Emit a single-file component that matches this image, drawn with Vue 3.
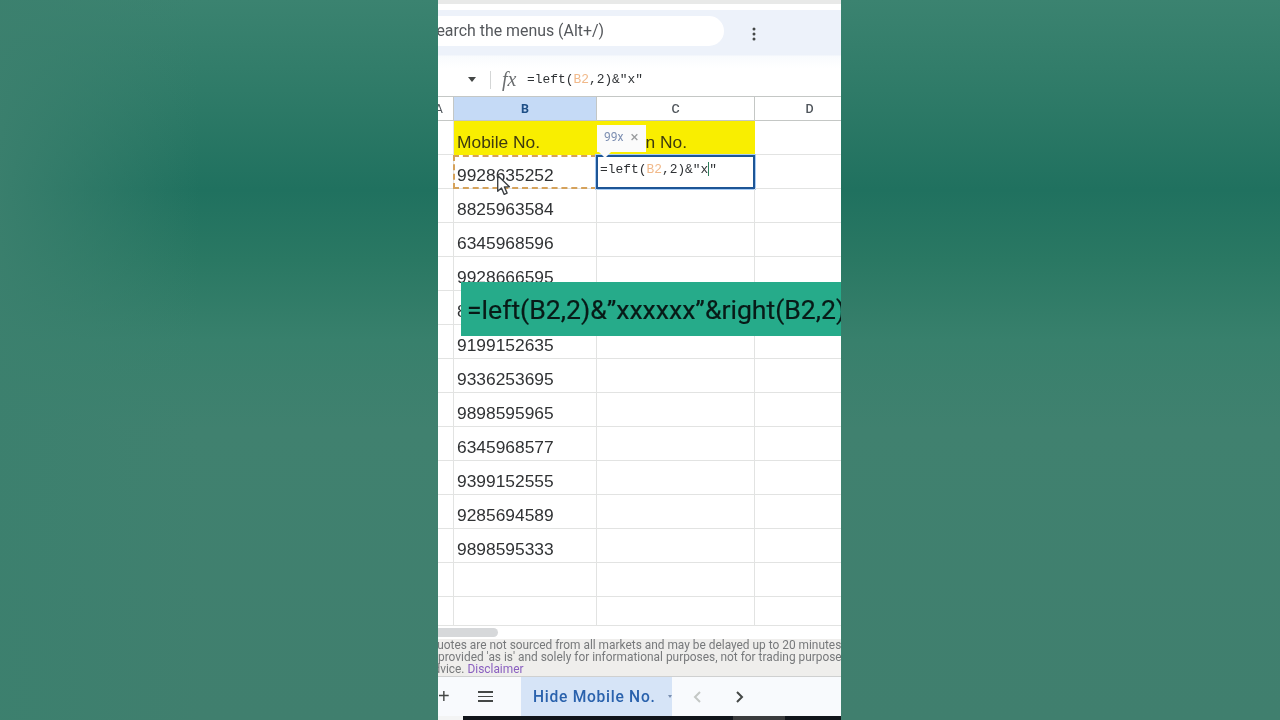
<script setup>
const numbers = [
  '9928635252', '8825963584', '6345968596', '9928666595', '8825963596', '9199152635',
  '9336253695', '9898595965', '6345968577', '9399152555', '9285694589', '9898595333', '', ''
]
const rows = numbers.map((num, i) => ({ num, id: i }))
</script>

<template>
  <div class="page">
    <div class="phone">
      <div class="top-strip"></div>
      <div class="toolbar">
        <div class="search"><span>Search the menus (Alt+/)</span></div>
        <svg class="dots" width="4" height="14" viewBox="0 0 4 14"><circle cx="2" cy="2" r="1.5" /><circle cx="2" cy="7" r="1.5" /><circle cx="2" cy="12" r="1.5" /></svg>
      </div>
      <div class="formula-bar">
        <span class="caret"></span>
        <span class="sep"></span>
        <span class="fx">fx</span>
        <span class="mono">=left(<b class="ref">B2</b>,2)&amp;"x"</span>
      </div>

      <div class="sheet">
        <div class="head-row">
          <div class="head a">A</div>
          <div class="head b">B</div>
          <div class="head c">C</div>
          <div class="head d">D</div>
        </div>
        <div class="row title-row">
          <div class="cell a"></div>
          <div class="cell yellow">Mobile No.</div>
          <div class="cell yellow">Hidden No.</div>
          <div class="cell"></div>
        </div>
        <div v-for="r in rows" :key="r.id" class="row">
          <div class="cell a"></div>
          <div class="cell" :class="{ copied: r.id === 0 }">{{ r.num }}</div>
          <div class="cell" :class="{ active: r.id === 0 }">
            <span v-if="r.id === 0" class="mono cell-input">=left(<b class="ref">B2</b>,2)&amp;"x<i class="text-caret"></i>"</span>
          </div>
          <div class="cell"></div>
        </div>

        <div class="hint">
          <span class="hint-val">99x</span>
          <span class="hint-close">×</span>
          <i class="hint-tail"></i>
        </div>
        <svg class="cursor" width="17" height="23" viewBox="0 0 16 22">
          <path d="M1.5 1.5v15l3.6-3.2 2.6 6.2 2.8-1.2-2.6-6h4.8z" fill="#fff" stroke="#3c4043" stroke-width="1.3" stroke-linejoin="round" />
        </svg>
      </div>

      <div class="scroll-area"><div class="scroll-thumb"></div></div>
      <div class="notice">
        <div class="l1">Quotes are not sourced from all markets and may be delayed up to 20 minutes. Information is</div>
        <div>provided 'as is' and solely for informational purposes, not for trading purposes or advice.</div>
        <div class="l3">advice. <span class="link">Disclaimer</span></div>
      </div>
      <div class="tabs">
        <span class="plus">+</span>
        <span class="menu"><i></i><i></i><i></i></span>
        <div class="tab">Hide Mobile No.<i class="tab-arrow"></i></div>
        <svg class="chev first" width="10" height="14" viewBox="0 0 10 14"><path d="M8 2 3 7l5 5" fill="none" stroke="#c4c7c5" stroke-width="2" /></svg>
        <svg class="chev" width="10" height="14" viewBox="0 0 10 14"><path d="M2 2l5 5-5 5" fill="none" stroke="#444746" stroke-width="2" /></svg>
      </div>
      <div class="taskbar"><span class="task-left"></span><span class="task-mid"></span></div>

      <div class="banner">=left(B2,2)&amp;”xxxxxx”&amp;right(B2,2)</div>
    </div>
  </div>
</template>

<style scoped>
.page {
  width: 1280px;
  height: 720px;
  display: flex;
  justify-content: center;
  overflow: hidden;
  background:
    linear-gradient(to right, rgba(60, 128, 110, 0.9) 0, rgba(60, 128, 110, 0) 200px),
    linear-gradient(to bottom, #3b8370 0, #2f7b68 90px, #20715f 190px, #2a7863 260px, #38806c 340px, #40816f 430px, #407f6e 720px);
}

.phone {
  position: relative;
  width: 403px;
  height: 720px;
  margin-left: -1px;
  display: flex;
  flex-direction: column;
  overflow: hidden;
  background: #fff;
  font-family: "Liberation Sans", Arial, sans-serif;
  color: #2b2b2b;
  filter: blur(0.45px);
}

.top-strip {
  height: 4px;
  background: #e8e9e8;
  flex: none;
}

.toolbar {
  height: 58px;
  margin-top: 6px;
  padding-bottom: 13px;
  box-sizing: border-box;
  flex: none;
  display: flex;
  align-items: center;
  background: linear-gradient(to bottom, #edf2fa 0, #edf2fa 45px, #f9fbfd 46px, #fff 58px);
}

.search {
  width: 296px;
  height: 30px;
  margin-top: -4px;
  margin-left: -10px;
  display: flex;
  align-items: center;
  background: #fff;
  border-radius: 0 15px 15px 0;
  font-family: Roboto, sans-serif;
  font-size: 15.9px;
  color: #55585c;
  white-space: nowrap;
  text-indent: -1px;
}

.dots {
  margin-left: 28px;
  margin-top: 2px;
  fill: #444746;
}

.formula-bar {
  height: 33px;
  margin-top: -5px;
  flex: none;
  display: flex;
  align-items: center;
  padding-left: 30px;
}

.caret {
  width: 0;
  height: 0;
  border-left: 4.5px solid transparent;
  border-right: 4.5px solid transparent;
  border-top: 5px solid #444746;
}

.sep {
  width: 1px;
  height: 18px;
  margin-left: 14px;
  background: #d4d6d6;
}

.fx {
  margin-left: 11px;
  width: 25px;
  font-family: "Liberation Serif", serif;
  font-style: italic;
  font-size: 20px;
  color: #6b6e70;
}

.mono {
  font-family: "Liberation Mono", monospace;
  font-size: 12.9px;
  color: #2f3235;
  white-space: nowrap;
}

.ref {
  font-weight: 400;
  color: #f1b98a;
}

.sheet {
  position: relative;
  height: 528px;
  flex: none;
  overflow: hidden;
  border-top: 1px solid #c4c7c5;
}

.head-row,
.row {
  display: grid;
  grid-template-columns: 16px 143px 158px 110px;
}

.head-row {
  height: 24px;
}

.head {
  display: flex;
  align-items: center;
  justify-content: center;
  padding-bottom: 1px;
  font-family: Roboto, sans-serif;
  font-size: 12.5px;
  font-weight: 500;
  color: #50565c;
  border-right: 1px solid #c4c7c5;
  border-bottom: 1px solid #c4c7c5;
}

.head.a {
  justify-content: flex-end;
  padding-right: 10px;
  font-weight: 400;
  overflow: hidden;
}

.head.b {
  background: #c5daf6;
  color: #1f4f86;
  font-weight: 700;
}

.row {
  height: 34px;
}

.cell {
  display: flex;
  align-items: flex-end;
  padding: 0 0 2px 3px;
  border-right: 1px solid #e2e3e2;
  border-bottom: 1px solid #e2e3e2;
  font-size: 17.4px;
  color: #303234;
  white-space: nowrap;
  position: relative;
}

.yellow {
  padding-bottom: 1px;
  background: #f9ee00;
  border-color: #f9ee00;
  color: #3d3a10;
}

.copied::after {
  content: "";
  position: absolute;
  inset: 0 -1px -1px -1px;
  border: 2px dashed #d5a25b;
}

.active::after {
  content: "";
  position: absolute;
  inset: 0 -1px -1px -1px;
  border: 2px solid #1d5596;
  box-shadow: 0 0 0 1px #a8ccf5;
}

.cell-input {
  position: absolute;
  left: 3px;
  top: 7px;
}

.text-caret {
  display: inline-block;
  width: 1px;
  height: 14px;
  vertical-align: -3px;
  background: #2e7d5b;
}

.hint {
  position: absolute;
  left: 159px;
  top: 28px;
  width: 49px;
  height: 27px;
  display: flex;
  align-items: center;
  gap: 7px;
  padding: 0 0 3px 7px;
  box-sizing: border-box;
  background: #fbfbfb;
  font-family: Roboto, sans-serif;
  font-size: 12px;
}

.hint-val {
  color: #7d8fb2;
}

.hint-close {
  color: #9a9c9e;
  font-size: 15px;
}

.hint-tail {
  position: absolute;
  left: 2px;
  bottom: -6px;
  border-left: 6px solid transparent;
  border-right: 6px solid transparent;
  border-top: 6px solid #fbfbfb;
}

.cursor {
  position: absolute;
  left: 58px;
  top: 77px;
}

.scroll-area {
  height: 14px;
  flex: none;
  padding-top: 2px;
  box-sizing: border-box;
  border-top: 1px solid #e2e3e2;
}

.scroll-thumb {
  width: 60px;
  height: 9px;
  background: #d6d8da;
  border-radius: 0 5px 5px 0;
}

.notice {
  height: 38px;
  flex: none;
  box-sizing: border-box;
  background: #efeeec;
  border-bottom: 1px solid #cfd0d0;
  font-family: Roboto, sans-serif;
  font-size: 11.9px;
  line-height: 12px;
  color: #77797b;
  white-space: nowrap;
}

.l1 {
  margin-left: -9px;
}

.l3 {
  margin-left: -11px;
}

.link {
  color: #8a5fc0;
}

.tabs {
  height: 39px;
  flex: none;
  display: flex;
  align-items: center;
  background: #f8fafd;
}

.plus {
  width: 10px;
  font-size: 20px;
  color: #444746;
  text-align: center;
}

.menu {
  margin-left: 30px;
  width: 15px;
  display: flex;
  flex-direction: column;
  gap: 3px;
}

.menu i {
  height: 1.6px;
  background: #444746;
}

.tab {
  position: relative;
  width: 151px;
  height: 39px;
  margin-left: 28px;
  padding-left: 12px;
  box-sizing: border-box;
  display: flex;
  align-items: center;
  background: #d6e4f7;
  font-family: Roboto, sans-serif;
  font-weight: 500;
  font-size: 15.6px;
  letter-spacing: 0.72px;
  color: #2a62ad;
  white-space: nowrap;
}

.tab-arrow {
  position: absolute;
  right: 0;
  top: 18px;
  border-left: 2px solid transparent;
  border-right: 2px solid transparent;
  border-top: 3px solid #7a8fb0;
}

.chev {
  margin-left: 33px;
}

.chev.first {
  margin-left: 20px;
}

.taskbar {
  flex: 1;
  display: flex;
  background: #11151b;
}

.task-left {
  width: 25px;
  background: #f3f4f4;
}

.task-mid {
  width: 52px;
  margin-left: 270px;
  background: #3a3b3d;
}

.banner {
  position: absolute;
  left: 23px;
  top: 282px;
  width: 400px;
  height: 54px;
  padding: 1px 0 0 6px;
  box-sizing: border-box;
  display: flex;
  align-items: center;
  background: #26ab8a;
  font-family: Roboto, sans-serif;
  font-size: 26.6px;
  color: #081a17;
  white-space: nowrap;
  -webkit-text-stroke: 0.2px #081a17;
}
</style>
